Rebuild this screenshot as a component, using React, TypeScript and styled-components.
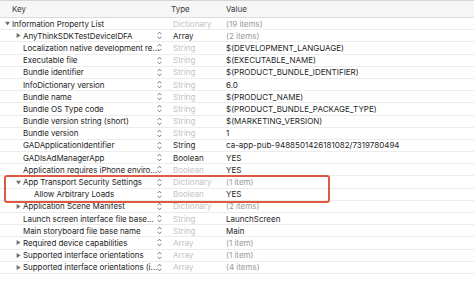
import React from "react";
import styled, { createGlobalStyle } from "styled-components";

const Global = createGlobalStyle`
  html, body { margin: 0; padding: 0; background: #fff; }
  body { font-family: Inter, "Liberation Sans", sans-serif; -webkit-font-smoothing: antialiased; }
`;

const Table = styled.div`
  position: relative;
  width: 474px;
  height: 286px;
  overflow: hidden;
  background: #fff;
  font-size: 8px;
  color: #262626;
`;

const Grid = styled.div`
  display: grid;
  grid-template-columns: 165px 55px 1fr;
`;

const HeaderCell = styled.div<{ $pad: number }>`
  height: 18px;
  box-sizing: border-box;
  display: flex;
  align-items: center;
  padding-left: ${(p) => p.$pad}px;
  background: #f6f6f6;
  border-top: 1px solid #d6d6d6;
  border-bottom: 1px solid #dcdcdc;
  color: #3a3a3a;
`;

const Cell = styled.div<{ $pad?: number; $tone?: "dark" | "light" | "mid" }>`
  height: 12.2px;
  box-sizing: border-box;
  display: flex;
  align-items: center;
  padding-left: ${(p) => p.$pad ?? 0}px;
  border-bottom: 1px solid #ececec;
  white-space: nowrap;
  overflow: hidden;
  color: ${(p) =>
    p.$tone === "light" ? "#c2c2c2" : p.$tone === "mid" ? "#9a9a9a" : "#262626"};
`;

const KeyText = styled.span`
  flex: 1;
  min-width: 0;
  white-space: nowrap;
  letter-spacing: -0.06px;
`;

const Disclosure = styled.span`
  width: 7px;
  flex: none;
  display: flex;
  align-items: center;
  color: #6e6e6e;
`;

const Stepper = styled.span`
  width: 6px;
  flex: none;
  margin-right: 3px;
  display: flex;
  align-items: center;
  justify-content: center;
`;

const Highlight = styled.div`
  position: absolute;
  left: 4px;
  top: 175px;
  width: 326px;
  height: 28px;
  box-sizing: border-box;
  border: 2px solid #dc5a40;
  border-radius: 3px;
  pointer-events: none;
`;

type Row = {
  key: string;
  level: number;
  tri?: "open" | "closed";
  type: string;
  typeDark?: boolean;
  value: string;
  valueMid?: boolean;
  stepper?: boolean;
};

const rows: Row[] = [
  { key: "Information Property List", level: 0, tri: "open", type: "Dictionary", value: "(19 items)", valueMid: true, stepper: false },
  { key: "AnyThinkSDKTestDeviceIDFA", level: 1, tri: "closed", type: "Array", typeDark: true, value: "(2 items)", valueMid: true },
  { key: "Localization native development re…", level: 1, type: "String", value: "$(DEVELOPMENT_LANGUAGE)" },
  { key: "Executable file", level: 1, type: "String", value: "$(EXECUTABLE_NAME)" },
  { key: "Bundle identifier", level: 1, type: "String", value: "$(PRODUCT_BUNDLE_IDENTIFIER)" },
  { key: "InfoDictionary version", level: 1, type: "String", value: "6.0" },
  { key: "Bundle name", level: 1, type: "String", value: "$(PRODUCT_NAME)" },
  { key: "Bundle OS Type code", level: 1, type: "String", value: "$(PRODUCT_BUNDLE_PACKAGE_TYPE)" },
  { key: "Bundle version string (short)", level: 1, type: "String", value: "$(MARKETING_VERSION)" },
  { key: "Bundle version", level: 1, type: "String", value: "1" },
  { key: "GADApplicationIdentifier", level: 1, type: "String", typeDark: true, value: "ca-app-pub-9488501426181082/7319780494" },
  { key: "GADIsAdManagerApp", level: 1, type: "Boolean", typeDark: true, value: "YES" },
  { key: "Application requires iPhone enviro…", level: 1, type: "Boolean", value: "YES" },
  { key: "App Transport Security Settings", level: 1, tri: "open", type: "Dictionary", value: "(1 item)", valueMid: true },
  { key: "Allow Arbitrary Loads", level: 2, type: "Boolean", value: "YES" },
  { key: "Application Scene Manifest", level: 1, tri: "closed", type: "Dictionary", value: "(2 items)", valueMid: true },
  { key: "Launch screen interface file base…", level: 1, type: "String", value: "LaunchScreen" },
  { key: "Main storyboard file base name", level: 1, type: "String", value: "Main" },
  { key: "Required device capabilities", level: 1, tri: "closed", type: "Array", value: "(1 item)", valueMid: true },
  { key: "Supported interface orientations", level: 1, tri: "closed", type: "Array", value: "(1 item)", valueMid: true },
  { key: "Supported interface orientations (i…", level: 1, tri: "closed", type: "Array", value: "(4 items)", valueMid: true },
];

const Tri = ({ dir }: { dir: "open" | "closed" }) => (
  <svg width="5" height="5" viewBox="0 0 5 5">
    {dir === "open" ? (
      <path d="M0 0.8 L5 0.8 L2.5 4.6 Z" fill="#707070" />
    ) : (
      <path d="M0.6 0 L4.6 2.5 L0.6 5 Z" fill="#707070" />
    )}
  </svg>
);

const UpDown = () => (
  <svg width="5" height="9" viewBox="0 0 5 9">
    <path d="M0.6 3.2 L2.5 1.2 L4.4 3.2" fill="none" stroke="#666" strokeWidth="0.9" />
    <path d="M0.6 5.8 L2.5 7.8 L4.4 5.8" fill="none" stroke="#666" strokeWidth="0.9" />
  </svg>
);

export default function App() {
  return (
    <>
      <Global />
      <Table>
        <Grid>
          <HeaderCell $pad={12}>Key</HeaderCell>
          <HeaderCell $pad={6}>Type</HeaderCell>
          <HeaderCell $pad={6}>Value</HeaderCell>
          {rows.map((r, i) => (
            <React.Fragment key={i}>
              <Cell $pad={5 + r.level * 11}>
                <Disclosure>{r.tri ? <Tri dir={r.tri} /> : null}</Disclosure>
                <KeyText>{r.key}</KeyText>
                <Stepper>{r.stepper === false ? null : <UpDown />}</Stepper>
              </Cell>
              <Cell $pad={8} $tone={r.typeDark ? "dark" : "light"}>{r.type}</Cell>
              <Cell $pad={6} $tone={r.valueMid ? "mid" : "dark"}>{r.value}</Cell>
            </React.Fragment>
          ))}
        </Grid>
        <Highlight />
      </Table>
    </>
  );
}
